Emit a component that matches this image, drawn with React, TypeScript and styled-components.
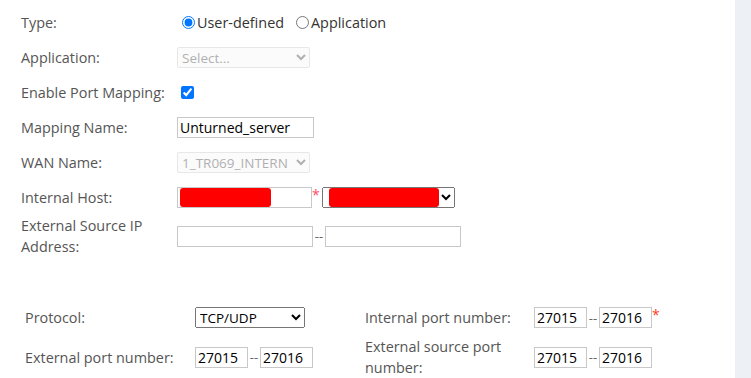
import React from 'react';
import styled, { createGlobalStyle } from 'styled-components';

const GlobalStyle = createGlobalStyle`
  html, body {
    margin: 0;
    padding: 0;
    background: #fff;
  }
  body {
    font-family: "Open Sans", "Noto Sans", sans-serif;
  }
`;

const Page = styled.div`
  display: flex;
  width: 751px;
  height: 378px;
  overflow: hidden;
`;

const Main = styled.div`
  flex: 1;
  background: #fff;
  padding-top: 5px;
`;

const SideStrip = styled.div`
  width: 16px;
  background: #edf1f5;
`;

const TopForm = styled.div`
  padding-left: 21px;
`;

const Row = styled.div<{ $h?: number }>`
  display: flex;
  align-items: center;
  min-height: ${(p) => p.$h ?? 35}px;
`;

const Label = styled.div<{ $w: number }>`
  width: ${(p) => p.$w}px;
  flex-shrink: 0;
  font-size: 14.4px;
  line-height: 21px;
  color: #555;
`;

const Controls = styled.div`
  display: flex;
  align-items: center;
`;

const RadioLabel = styled.label`
  display: inline-flex;
  align-items: center;
  font-size: 14.4px;
  color: #333;
  margin-right: 7px;

  input {
    margin: 0 2px 0 5px;
  }
`;

const Check = styled.input`
  margin: 0 0 0 4px;
`;

const TextBox = styled.input<{ $w: number }>`
  box-sizing: border-box;
  width: ${(p) => p.$w}px;
  height: 21px;
  border: 1px solid #c8c8c8;
  border-radius: 0;
  padding: 0 2px;
  font-family: inherit;
  font-size: 14px;
  color: #000;
  outline: none;
`;

const Dropdown = styled.select<{ $w: number; $h?: number }>`
  box-sizing: border-box;
  width: ${(p) => p.$w}px;
  height: ${(p) => p.$h ?? 21}px;
  font-family: inherit;
  font-size: 13.5px;
  color: #000;

  &:disabled {
    color: #8f8f8f;
    background: #fafafa;
    border: 1px solid #ddd;
    border-radius: 2px;
  }
`;

const Dash = styled.span`
  width: 12px;
  text-align: center;
  font-size: 13px;
  color: #666;
  font-variant-ligatures: none;
`;

const Required = styled.span<{ $color: string }>`
  color: ${(p) => p.$color};
  font-size: 14px;
  margin: 0 2px 6px 0;
  line-height: 1;
`;

const Masked = styled.span`
  position: relative;
  display: inline-flex;
`;

const Redaction = styled.span<{ $left: number; $width: number }>`
  position: absolute;
  left: ${(p) => p.$left}px;
  top: 1px;
  bottom: 1px;
  width: ${(p) => p.$width}px;
  background: #ff0000;
  border-radius: 3px;
  pointer-events: none;
`;

const PortGrid = styled.div`
  display: grid;
  grid-template-columns: 170px 170px 169px auto;
  grid-template-rows: 39px 40px;
  align-items: center;
  margin-top: 41px;
  padding-left: 25px;
`;

const PortPair: React.FC<{ from: string; to: string; required?: boolean }> = ({ from, to, required }) => (
  <Controls>
    <TextBox $w={53} defaultValue={from} />
    <Dash>--</Dash>
    <TextBox $w={53} defaultValue={to} />
    {required && <Required $color="#ff3b1f">*</Required>}
  </Controls>
);

const App: React.FC = () => {
  return (
    <Page>
      <GlobalStyle />
      <Main>
        <TopForm>
          <Row>
            <Label $w={156}>Type:</Label>
            <Controls>
              <RadioLabel>
                <input type="radio" name="type" defaultChecked />
                User-defined
              </RadioLabel>
              <RadioLabel>
                <input type="radio" name="type" />
                Application
              </RadioLabel>
            </Controls>
          </Row>
          <Row>
            <Label $w={156}>Application:</Label>
            <Dropdown $w={133} disabled>
              <option>Select...</option>
            </Dropdown>
          </Row>
          <Row>
            <Label $w={156}>Enable Port Mapping:</Label>
            <Check type="checkbox" defaultChecked />
          </Row>
          <Row>
            <Label $w={156}>Mapping Name:</Label>
            <TextBox $w={137} defaultValue="Unturned_server" />
          </Row>
          <Row>
            <Label $w={156}>WAN Name:</Label>
            <Dropdown $w={133} disabled>
              <option>1_TR069_INTERN</option>
            </Dropdown>
          </Row>
          <Row>
            <Label $w={156}>Internal Host:</Label>
            <Controls>
              <Masked>
                <TextBox $w={135} defaultValue="" />
                <Redaction $left={3} $width={91} />
              </Masked>
              <Required $color="#ff4a6a">*</Required>
              <Masked>
                <Dropdown $w={133}>
                  <option> </option>
                </Dropdown>
                <Redaction $left={7} $width={110} />
              </Masked>
            </Controls>
          </Row>
          <Row $h={42}>
            <Label $w={156}>
              External Source IP
              <br />
              Address:
            </Label>
            <Controls>
              <TextBox $w={136} />
              <Dash>--</Dash>
              <TextBox $w={136} />
            </Controls>
          </Row>
        </TopForm>

        <PortGrid>
          <Label $w={170}>Protocol:</Label>
          <Dropdown $w={110} $h={21}>
            <option>TCP/UDP</option>
            <option>TCP</option>
            <option>UDP</option>
          </Dropdown>
          <Label $w={169}>Internal port number:</Label>
          <PortPair from="27015" to="27016" required />

          <Label $w={170}>External port number:</Label>
          <PortPair from="27015" to="27016" />
          <Label $w={169}>
            External source port
            <br />
            number:
          </Label>
          <PortPair from="27015" to="27016" />
        </PortGrid>
      </Main>
      <SideStrip />
    </Page>
  );
};

export default App;
